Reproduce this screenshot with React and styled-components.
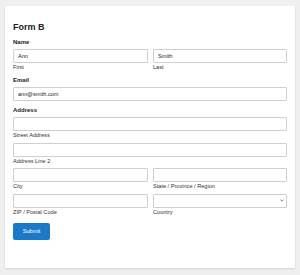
import React from "react";
import styled, { createGlobalStyle } from "styled-components";

const GlobalStyle = createGlobalStyle`
  html, body {
    margin: 0;
    padding: 0;
    background: #f0f0f0;
    font-family: "Liberation Sans", Arial, sans-serif;
    color: #222;
  }
  * { box-sizing: border-box; }
`;

const Page = styled.div`
  padding: 6px 5px;
  min-height: 275px;
`;

const Card = styled.form`
  background: #fff;
  box-shadow: 0 1px 2px rgba(0, 0, 0, 0.12);
  padding: 14.7px 8px 27px;
  height: 262px;
`;

const Title = styled.h2`
  margin: 0 0 6px;
  font-size: 9px;
  line-height: 12px;
  font-weight: bold;
  color: #222;
`;

const Group = styled.div`
  margin-bottom: ${(p) => p.$after || 6}px;
`;

const Label = styled.div`
  font-size: 6px;
  line-height: 7px;
  font-weight: bold;
  color: #222;
  margin-bottom: 3px;
`;

const Row = styled.div`
  display: grid;
  grid-template-columns: ${(p) => (p.$cols === 2 ? "135px 134px" : "1fr")};
  column-gap: 5px;
`;

const Cell = styled.div`
  margin-bottom: ${(p) => p.$gap || 0}px;
`;

const Input = styled.input`
  display: block;
  width: 100%;
  height: 14px;
  margin: 0;
  padding: 0 4px;
  border: 1px solid #cfcfcf;
  border-radius: 1px;
  font-family: "Liberation Sans", Arial, sans-serif;
  font-size: 5.6px;
  color: #222;
  background: #fff;
  outline: none;
`;

const SelectWrap = styled.div`
  position: relative;
`;

const Select = styled.select`
  display: block;
  width: 100%;
  height: 14px;
  margin: 0;
  padding: 0 4px;
  border: 1px solid #cfcfcf;
  border-radius: 1px;
  font-family: "Liberation Sans", Arial, sans-serif;
  font-size: 5.6px;
  background: #fff;
  appearance: none;
  outline: none;
`;

const Chevron = styled.svg`
  position: absolute;
  right: 3px;
  top: 5.5px;
  width: 4px;
  height: 3px;
  pointer-events: none;
`;

const Sub = styled.div`
  font-size: 5.6px;
  line-height: 7px;
  color: #333;
  margin-top: 1px;
`;

const Submit = styled.button`
  display: block;
  margin-top: 7px;
  width: 37px;
  height: 17px;
  padding: 0;
  border: none;
  border-radius: 2px;
  background: #1b7ac8;
  color: #fff;
  font-family: "Liberation Sans", Arial, sans-serif;
  font-size: 5.6px;
`;

export default function App() {
  return (
    <Page>
      <GlobalStyle />
      <Card onSubmit={(e) => e.preventDefault()}>
        <Title>Form B</Title>

        <Group $after={6.5}>
          <Label>Name</Label>
          <Row $cols={2}>
            <Cell>
              <Input defaultValue="Ann" />
              <Sub>First</Sub>
            </Cell>
            <Cell>
              <Input defaultValue="Smith" />
              <Sub>Last</Sub>
            </Cell>
          </Row>
        </Group>

        <Group $after={5.7}>
          <Label>Email</Label>
          <Input defaultValue="ann@smith.com" />
        </Group>

        <Group $after={0}>
          <Label>Address</Label>
          <Cell $gap={3.7}>
            <Input />
            <Sub>Street Address</Sub>
          </Cell>
          <Cell $gap={3.7}>
            <Input />
            <Sub>Address Line 2</Sub>
          </Cell>
          <Row $cols={2}>
            <Cell $gap={3.7}>
              <Input />
              <Sub>City</Sub>
            </Cell>
            <Cell $gap={3.7}>
              <Input />
              <Sub>State / Province / Region</Sub>
            </Cell>
            <Cell>
              <Input />
              <Sub>ZIP / Postal Code</Sub>
            </Cell>
            <Cell>
              <SelectWrap>
                <Select defaultValue="">
                  <option value=""></option>
                </Select>
                <Chevron viewBox="0 0 4 3">
                  <path d="M0.5 0.6 L2 2.2 L3.5 0.6" fill="none" stroke="#555" strokeWidth="0.7" />
                </Chevron>
              </SelectWrap>
              <Sub>Country</Sub>
            </Cell>
          </Row>
        </Group>

        <Submit type="submit">Submit</Submit>
      </Card>
    </Page>
  );
}
